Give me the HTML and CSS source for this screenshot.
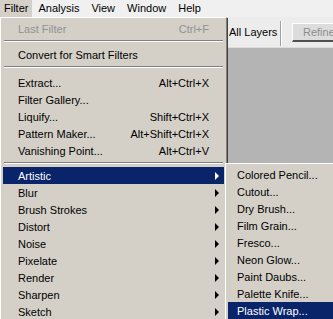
FILE: index.html
```html
<!DOCTYPE html>
<html>
<head>
<meta charset="utf-8">
<link rel="stylesheet" href="styles.css">
</head>
<body>
<div class="app">
  <div class="menubar">
    <span class="mb-item active">Filter</span>
    <span class="mb-item">Analysis</span>
    <span class="mb-item">View</span>
    <span class="mb-item">Window</span>
    <span class="mb-item">Help</span>
  </div>
  <div class="toolbar">
    <span class="tb-label">All Layers</span>
    <span class="tb-sep"></span>
    <span class="tb-btn"><span class="tb-btn-text">Refine Edge</span></span>
  </div>
  <div class="workspace"></div>

  <div class="menu main">
    <div class="row disabled"><span class="lbl">Last Filter</span><span class="key">Ctrl+F</span></div>
    <div class="sep"></div>
    <div class="row"><span class="lbl">Convert for Smart Filters</span></div>
    <div class="sep sep2"></div>
    <div class="row"><span class="lbl">Extract...</span><span class="key">Alt+Ctrl+X</span></div>
    <div class="row"><span class="lbl">Filter Gallery...</span></div>
    <div class="row"><span class="lbl">Liquify...</span><span class="key">Shift+Ctrl+X</span></div>
    <div class="row"><span class="lbl">Pattern Maker...</span><span class="key">Alt+Shift+Ctrl+X</span></div>
    <div class="row"><span class="lbl">Vanishing Point...</span><span class="key">Alt+Ctrl+V</span></div>
    <div class="sep sep3"></div>
    <div class="row sub hl"><span class="lbl">Artistic</span><span class="arrow"></span></div>
    <div class="row sub"><span class="lbl">Blur</span><span class="arrow"></span></div>
    <div class="row sub"><span class="lbl">Brush Strokes</span><span class="arrow"></span></div>
    <div class="row sub"><span class="lbl">Distort</span><span class="arrow"></span></div>
    <div class="row sub"><span class="lbl">Noise</span><span class="arrow"></span></div>
    <div class="row sub"><span class="lbl">Pixelate</span><span class="arrow"></span></div>
    <div class="row sub"><span class="lbl">Render</span><span class="arrow"></span></div>
    <div class="row sub"><span class="lbl">Sharpen</span><span class="arrow"></span></div>
    <div class="row sub"><span class="lbl">Sketch</span><span class="arrow"></span></div>
  </div>

  <div class="menu submenu">
    <div class="row"><span class="lbl">Colored Pencil...</span></div>
    <div class="row"><span class="lbl">Cutout...</span></div>
    <div class="row"><span class="lbl">Dry Brush...</span></div>
    <div class="row"><span class="lbl">Film Grain...</span></div>
    <div class="row"><span class="lbl">Fresco...</span></div>
    <div class="row"><span class="lbl">Neon Glow...</span></div>
    <div class="row"><span class="lbl">Paint Daubs...</span></div>
    <div class="row"><span class="lbl">Palette Knife...</span></div>
    <div class="row hl"><span class="lbl">Plastic Wrap...</span></div>
  </div>
</div>
</body>
</html>
```

FILE: styles.css
```css
html, body {
  margin: 0;
  padding: 0;
  overflow: hidden;
}
body {
  font-family: "Liberation Sans", Arial, sans-serif;
  font-size: 11px;
  color: #000;
  background: #a8a8a8;
}
.app {
  position: relative;
  width: 333px;
  height: 319px;
  overflow: hidden;
  display: flex;
  flex-direction: column;
}
.menubar {
  height: 17px;
  background: #f0f0f0;
  display: flex;
  align-items: center;
  font-size: 11px;
}
.mb-item {
  height: 17px;
  line-height: 16px;
  padding: 0 6px;
}
.mb-item.active {
  background: #d4d0c8;
  padding: 0 4px 0 4px;
}
.toolbar {
  height: 30px;
  background: #ececec;
  border-bottom: 1px solid #dcdcdc;
  display: flex;
  align-items: center;
  padding-left: 229px;
  font-size: 11px;
}
.tb-label {
  width: 47px;
  white-space: nowrap;
}
.tb-sep {
  width: 1px;
  height: 25px;
  background: #a0a0a0;
  border-right: 1px solid #fff;
  margin: 3px 10px 0 4px;
}
.tb-btn {
  flex: 1;
  min-width: 0;
  overflow: hidden;
  white-space: nowrap;
  color: #8c8c8c;
  background: #dcdcdc;
  border-top: 1px solid #fff;
  border-left: 1px solid #fff;
  border-bottom: 2px solid #505050;
  padding: 2px 0 2px 10px;
  margin-top: 1px;
}
.workspace {
  flex: 1;
  background: #b4b4b4;
}
.menu {
  position: absolute;
  background: #d4d0c8;
  border-top: 1px solid #fff;
  border-left: 1px solid #fff;
  border-right: 1px solid #808080;
  border-bottom: 1px solid #808080;
  box-shadow: 1px 1px 0 #404040;
  padding: 2px;
}
.main {
  left: 0;
  top: 17px;
  width: 221px;
  height: 320px;
}
.submenu {
  left: 225px;
  top: 163px;
  width: 120px;
  height: 170px;
}
.row {
  height: 17px;
  display: flex;
  align-items: center;
  padding-left: 15px;
  padding-right: 5px;
  white-space: nowrap;
}
.row .lbl {
  flex: 1;
}
.row .key {
  text-align: right;
  padding-right: 10px;
}
.row.disabled {
  color: #929292;
}
.row.hl {
  background: #0a246a;
  color: #fff;
}
.submenu .row {
  padding-left: 9px;
}
.sep {
  height: 0;
  border-top: 1px solid #808080;
  border-bottom: 1px solid #fff;
  margin: 3px 1px 4px;
}
.sep2 {
  margin-bottom: 6px;
}
.sep3 {
  margin-bottom: 3px;
}
.arrow {
  width: 0;
  height: 0;
  border-top: 4px solid transparent;
  border-bottom: 4px solid transparent;
  border-left: 4px solid #000;
}
.row.hl .arrow {
  border-left-color: #fff;
}
```
